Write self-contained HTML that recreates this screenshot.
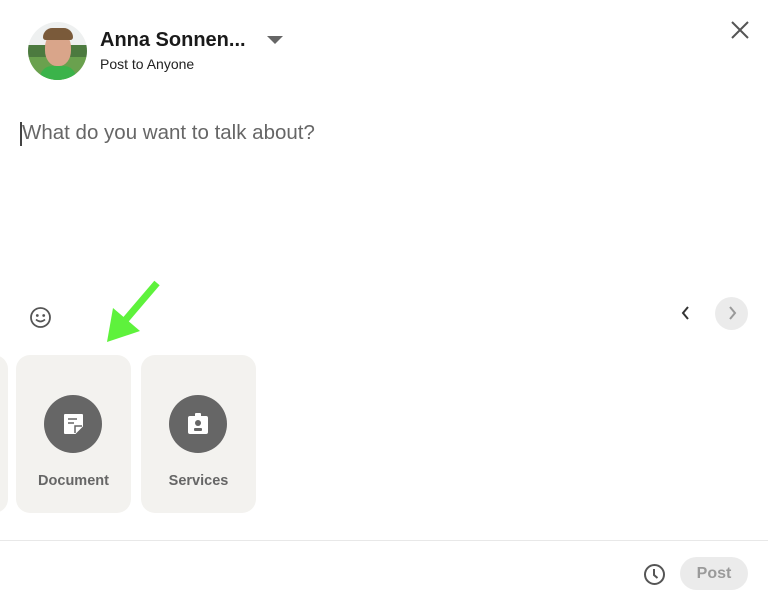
<!DOCTYPE html>
<html><head><style>
body{margin:0;width:768px;height:603px;background:#fff;font-family:"Liberation Sans",sans-serif;position:relative;overflow:hidden}
.a{position:absolute}
.card{position:absolute;top:355px;width:115px;height:158px;background:#f3f2ef;border-radius:14px}
.circ{position:absolute;left:28px;top:40px;width:58px;height:58px;border-radius:50%;background:#666}
.lbl{position:absolute;top:118px;width:100%;text-align:center;font-weight:bold;font-size:14.5px;color:#666}
</style></head><body>
<div class="a" style="left:28px;top:22px;width:59px;height:58px;border-radius:50%;overflow:hidden;background:linear-gradient(#eef0f0 0 40%,#4c7a3f 40% 60%,#6aa14e 60%)">
<div class="a" style="left:17px;top:10px;width:26px;height:34px;border-radius:45%;background:#d9a58a"></div>
<div class="a" style="left:15px;top:6px;width:30px;height:12px;border-radius:10px 10px 3px 3px;background:#7a5a3a"></div>
<div class="a" style="left:12px;top:44px;width:36px;height:20px;border-radius:12px 12px 0 0;background:#3bb34a"></div>
</div>
<div class="a" style="left:100px;top:29px;font-size:20px;font-weight:bold;color:#1a1a1a">Anna Sonnen...</div>
<div class="a" style="left:100px;top:56px;font-size:14px;color:#222">Post to Anyone</div>
<svg class="a" style="left:267px;top:35px" width="16" height="10"><path d="M0 1h16L8 9z" fill="#666"/></svg>
<svg class="a" style="left:730px;top:20px" width="20" height="20"><path d="M2 2L18 18M18 2L2 18" stroke="#555" stroke-width="2"/></svg>
<div class="a" style="left:20px;top:122px;width:1.5px;height:24px;background:#444"></div>
<div class="a" style="left:22px;top:121px;font-size:20.5px;color:#666">What do you want to talk about?</div>
<svg class="a" style="left:29px;top:306px" width="23" height="23"><circle cx="11.5" cy="11.5" r="9.5" fill="none" stroke="#555" stroke-width="1.8"/><circle cx="8.3" cy="9.5" r="1.4" fill="#555"/><circle cx="14.7" cy="9.5" r="1.4" fill="#555"/><path d="M7 13.5q4.5 4 9 0" fill="none" stroke="#555" stroke-width="1.6"/></svg>
<svg class="a" style="left:100px;top:278px" width="65" height="70"><path d="M57 5L22 46" stroke="#5ef23c" stroke-width="7"/><path d="M7 64L13 30L40 53z" fill="#5ef23c"/></svg>
<svg class="a" style="left:680px;top:304px" width="12" height="18"><path d="M8 3L3 9L8 15" fill="none" stroke="#333" stroke-width="2"/></svg>
<div class="a" style="left:715px;top:297px;width:33px;height:33px;border-radius:50%;background:#ebebeb"></div>
<svg class="a" style="left:726px;top:304px" width="12" height="18"><path d="M4 3L9 9L4 15" fill="none" stroke="#999" stroke-width="2"/></svg>
<div class="card" style="left:-107px"></div>
<div class="card" style="left:16px"><div class="circ"><svg width="58" height="58"><path d="M21 20h17v11l-7 7H21z" fill="#fff" stroke="#fff" stroke-linejoin="round" stroke-width="2"/><path d="M24 24h9M24 28h6" stroke="#666" stroke-width="1.5"/><path d="M31 38v-7h7" fill="none" stroke="#666" stroke-width="1.5"/></svg></div><div class="lbl">Document</div></div>
<div class="card" style="left:141px"><div class="circ"><svg width="58" height="58"><rect x="19" y="21" width="20" height="18" rx="2" fill="#fff"/><rect x="26" y="18" width="6" height="5" rx="1" fill="#fff"/><circle cx="29" cy="28" r="3" fill="#666"/><rect x="25" y="33" width="8" height="3" rx="1" fill="#666"/></svg></div><div class="lbl">Services</div></div>
<div class="a" style="left:0;top:540px;width:768px;height:1px;background:#e8e8e8"></div>
<svg class="a" style="left:643px;top:563px" width="23" height="23"><circle cx="11.5" cy="11.5" r="9.5" fill="none" stroke="#555" stroke-width="2"/><path d="M11 6v6l3.5 3" fill="none" stroke="#555" stroke-width="2"/></svg>
<div class="a" style="left:680px;top:557px;width:68px;height:33px;border-radius:17px;background:#ebebeb;color:#9a9a9a;font-weight:bold;font-size:16px;text-align:center;line-height:34px">Post</div>
</body></html>
